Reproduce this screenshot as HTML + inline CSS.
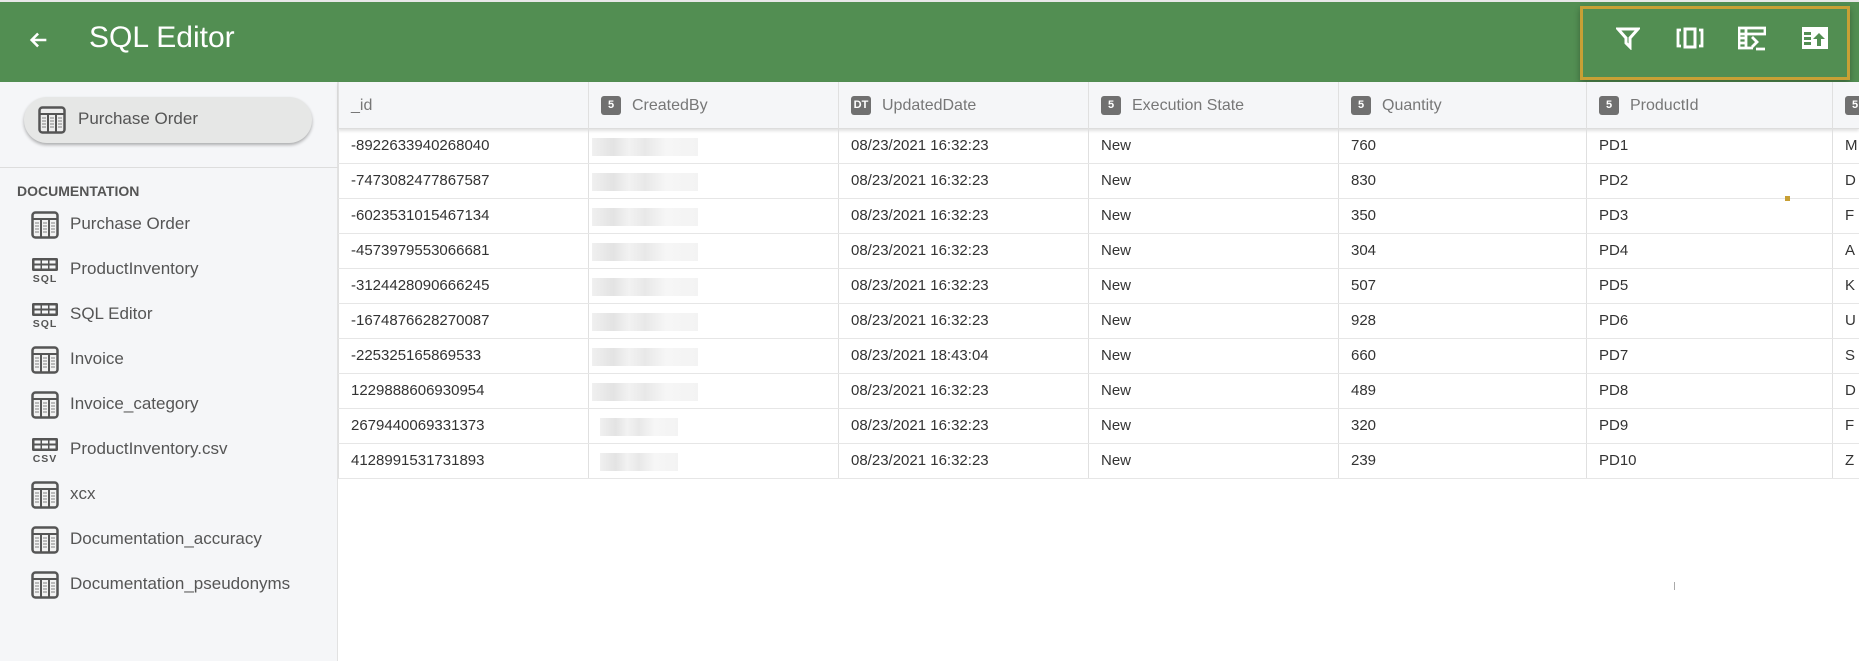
<!DOCTYPE html>
<html><head><style>
*{margin:0;padding:0;box-sizing:border-box}
body{width:1859px;height:661px;overflow:hidden;background:#fff;font-family:"Liberation Sans",sans-serif;position:relative}
.hdr{position:absolute;left:0;top:0;width:1859px;height:82px;background:#528e52;border-top:2px solid #e8e8e8}
.title{position:absolute;left:89px;top:19px;color:#fff;font-size:30px}
.side{position:absolute;left:0;top:82px;width:338px;height:579px;background:#f5f6f8;border-right:1px solid #e2e2e2}
.pill{position:absolute;left:24px;top:15px;width:288px;height:46px;border-radius:23px;background:#e6e7e6;box-shadow:0 2px 3px rgba(0,0,0,.3)}
.pill span{position:absolute;left:54px;top:12px;font-size:17px;color:#555}
.sep{position:absolute;left:0;top:85px;width:338px;height:1px;background:#ddd}
.lbl{position:absolute;left:17px;top:101px;font-size:14px;font-weight:bold;color:#555}
.it{position:absolute;left:70px;font-size:17px;color:#555}
.ic{position:absolute;left:31px}
.cell{position:absolute;font-size:15px;color:#333;white-space:nowrap}
.hc{position:absolute;font-size:16px;color:#777;white-space:nowrap;line-height:20px}
.badge{display:inline-block;width:20px;height:19px;background:#707070;border-radius:3px;color:#fff;font-size:11px;font-weight:bold;text-align:center;line-height:19px;margin-right:11px;vertical-align:top}
.blur{position:absolute;height:18px;background:linear-gradient(90deg,#f0f0f0,#e3e3e3 20%,#f2f2f2 35%,#e8e8e8 50%,#f6f6f6 70%,#f3f3f3)}
</style></head><body>
<div class="hdr">
<svg style="position:absolute;left:28px;top:27px" width="22" height="22" viewBox="0 0 24 24"><path d="M20 12H5M11 5l-7 7 7 7" stroke="#fff" stroke-width="2.8" fill="none"/></svg>
<div class="title">SQL Editor</div>
<div style="position:absolute;left:1580px;top:4px;width:270px;height:74px;border:3px solid #c8a035;box-shadow:0 3px 6px rgba(0,0,0,.3)"></div>
<svg style="position:absolute;left:1616px;top:24px" width="24" height="24" viewBox="0 0 24 24"><path d="M2 3h20l-8 9v9l-4-4v-5z" fill="none" stroke="#fff" stroke-width="3"/></svg>
<svg style="position:absolute;left:1676px;top:24px" width="28" height="24" viewBox="0 0 28 24"><path d="M5 4H2v16h3M23 4h3v16h-3" stroke="#fff" stroke-width="2.8" fill="none"/><rect x="9" y="3" width="10" height="18" stroke="#fff" stroke-width="3" fill="none"/></svg>
<svg style="position:absolute;left:1738px;top:24px" width="28" height="26" viewBox="0 0 28 26"><path d="M1 2h26v6H1zM1 2v20h14M8 2v20" stroke="#fff" stroke-width="2.8" fill="none"/><path d="M1 12h6M1 17h6" stroke="#fff" stroke-width="2.8"/><path d="M14 11l5 5-5 5M18 23h9" stroke="#fff" stroke-width="2.8" fill="none"/></svg>
<svg style="position:absolute;left:1801px;top:24px" width="28" height="24" viewBox="0 0 28 24"><rect x="1" y="1" width="26" height="22" fill="#fff"/><rect x="3" y="6" width="7" height="3" fill="#528e52"/><rect x="3" y="11" width="7" height="3" fill="#528e52"/><rect x="3" y="16" width="7" height="3" fill="#528e52"/><path d="M18 7l-6 6h4v7h4v-7h4z" fill="#528e52"/></svg>
</div>

<div class="side">
<div class="pill"><svg style="position:absolute;left:14px;top:9px" width="28" height="28" viewBox="0 0 28 28"><rect x="1.5" y="1.5" width="25" height="25" rx="3" fill="#eee" stroke="#555" stroke-width="2.5"/><path d="M1.5 8h25M10 8v18M18 8v18" stroke="#555" stroke-width="2"/><path d="M4 12h4M4 15h4M4 18h4M4 21h4M12 12h4M12 15h4M12 18h4M12 21h4M20 12h4M20 15h4M20 18h4M20 21h4" stroke="#999" stroke-width="1.2"/></svg><span>Purchase Order</span></div>
<div class="sep"></div>
<div class="lbl">DOCUMENTATION</div>
</div>

<div id="items"></div>

<div style="position:absolute;left:338px;top:82px;width:1521px;height:47px;background:#f5f6f8;border-bottom:1px solid #ddd;box-shadow:0 2px 3px rgba(0,0,0,.12)"></div>
<div id="tbl"></div>
<div style="position:absolute;left:1785px;top:196px;width:5px;height:5px;background:#c8a035"></div>
<div style="position:absolute;left:1674px;top:582px;width:1px;height:8px;background:#aaa"></div>

<script>
var items=[["t","Purchase Order"],["s","ProductInventory"],["s","SQL Editor"],["t","Invoice"],["t","Invoice_category"],["c","ProductInventory.csv"],["t","xcx"],["t","Documentation_accuracy"],["t","Documentation_pseudonyms"]];
var h="";
var tIcon='<svg width="28" height="28" viewBox="0 0 28 28"><rect x="1.5" y="1.5" width="25" height="25" rx="3" fill="#f2f2f2" stroke="#555" stroke-width="2.5"/><path d="M1.5 8h25M10 8v18M18 8v18" stroke="#555" stroke-width="2"/><path d="M4 12h4M4 15h4M4 18h4M4 21h4M12 12h4M12 15h4M12 18h4M12 21h4M20 12h4M20 15h4M20 18h4M20 21h4" stroke="#999" stroke-width="1.2"/></svg>';
function sIcon(t){return '<svg width="28" height="28" viewBox="0 0 28 28"><rect x="1" y="2" width="26" height="13" rx="1.5" fill="#555"/><rect x="3.5" y="4.5" width="6" height="3" fill="#f5f6f8"/><rect x="11" y="4.5" width="6" height="3" fill="#f5f6f8"/><rect x="18.5" y="4.5" width="6" height="3" fill="#f5f6f8"/><rect x="3.5" y="9.5" width="6" height="3" fill="#f5f6f8"/><rect x="11" y="9.5" width="6" height="3" fill="#f5f6f8"/><rect x="18.5" y="9.5" width="6" height="3" fill="#f5f6f8"/><text x="14" y="26" text-anchor="middle" font-family="Liberation Sans" font-weight="bold" font-size="10.5" letter-spacing="1" fill="#555">'+t+'</text></svg>';}
for(var i=0;i<items.length;i++){var y=225+45*i;
h+='<div class="ic" style="top:'+(y-14)+'px">'+(items[i][0]=="t"?tIcon:sIcon(items[i][0]=="s"?"SQL":"CSV"))+'</div>';
h+='<div class="it" style="top:'+(y-11)+'px">'+items[i][1]+'</div>';}
document.getElementById("items").innerHTML=h;
var cols=[338,588,838,1088,1338,1586,1832];
var hd=[["","_id"],["5","CreatedBy"],["DT","UpdatedDate"],["5","Execution State"],["5","Quantity"],["5","ProductId"],["5",""]];
var ids=["-8922633940268040","-7473082477867587","-6023531015467134","-4573979553066681","-3124428090666245","-1674876628270087","-225325165869533","1229888606930954","2679440069331373","4128991531731893"];
var q=["760","830","350","304","507","928","660","489","320","239"];
var L="MDFAKUSDFZ";
var t="";
for(var c=0;c<7;c++){var x=cols[c];
t+='<div style="position:absolute;left:'+x+'px;top:82px;width:1px;height:397px;background:#e0e0e0"></div>';
t+='<div class="hc" style="left:'+(x+13)+'px;top:96px">'+(hd[c][0]?'<span class="badge">'+(hd[c][0]=="5"?"5":"DT")+'</span>':'')+hd[c][1]+'</div>';}
for(var r=0;r<10;r++){var y=129+35*r;
t+='<div style="position:absolute;left:338px;top:'+(y+34)+'px;width:1521px;height:1px;background:#e6e6e6"></div>';
var v=[ids[r],"",(r==6?"08/23/2021 18:43:04":"08/23/2021 16:32:23"),"New",q[r],"PD"+(r+1),L[r]];
for(var c=0;c<7;c++){if(c==1){t+='<div class="blur" style="left:'+(r>=8?600:592)+'px;top:'+(y+9)+'px;width:'+(r>=8?78:106)+'px"></div>';continue;}
t+='<div class="cell" style="left:'+(cols[c]+13)+'px;top:'+(y+8)+'px">'+v[c]+'</div>';}}
document.getElementById("tbl").innerHTML=t;
</script>
</body></html>
